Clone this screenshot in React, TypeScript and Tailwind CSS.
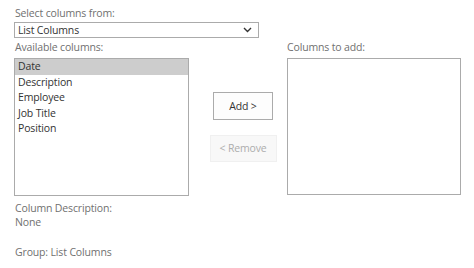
import { useState } from 'react';

const available = ['Date', 'Description', 'Employee', 'Job Title', 'Position'];

export default function App() {
    const [selected, setSelected] = useState('Date');

    return (
        <div className="w-[474px] h-[268px] bg-white pl-[14px] pt-[6px] font-['Open_Sans',sans-serif] text-[10.5px] tracking-[-0.15px] leading-[15px] text-[#707070] overflow-hidden">
            {/* Source picker */}
            <div className="h-[15px] pl-[1px]">Select columns from:</div>
            <div className="mt-[1px] w-[245px] h-[16px] border border-[#ababab] flex items-center justify-between pl-[3px] pr-[6px] text-[#333]">
                <span>List Columns</span>
                <svg width="9" height="6" viewBox="0 0 9 6" fill="none">
                    <path d="M1 1l3.5 3.5L8 1" stroke="#333" strokeWidth="1.4" />
                </svg>
            </div>

            {/* Column pickers */}
            <div className="mt-[2px] flex">
                <div className="w-[175px]">
                    <div className="h-[15px] pl-[1px]">Available columns:</div>
                    <div className="mt-[3px] h-[138px] border border-[#ababab]">
                        {available.map((col) => (
                            <div
                                key={col}
                                onClick={() => setSelected(col)}
                                className={`h-[15.5px] pl-[3px] text-[#333] leading-[15.5px] ${selected === col ? 'bg-[#cdcdcd]' : ''}`}
                            >
                                {col}
                            </div>
                        ))}
                    </div>
                </div>

                <div className="w-[98px] flex flex-col items-center pl-[10px] pt-[52px]">
                    <button className="w-[60px] h-[28px] border border-[#ababab] bg-[#fdfdfd] text-[#333]">
                        Add &gt;
                    </button>
                    <button className="mt-[15px] w-[67px] h-[27px] border border-[#f0f0f0] bg-[#f8f8f8] text-[#adadad]">
                        &lt; Remove
                    </button>
                </div>

                <div className="w-[174px]">
                    <div className="h-[15px]">Columns to add:</div>
                    <div className="mt-[3px] h-[137px] border border-[#ababab]"></div>
                </div>
            </div>

            {/* Details */}
            <div className="mt-[5px] pl-[1px]">
                <div className="h-[14px] leading-[14px]">Column Description:</div>
                <div className="h-[14px] leading-[14px]">None</div>
                <div className="mt-[16px] h-[14px] leading-[14px]">Group: List Columns</div>
            </div>
        </div>
    );
}
